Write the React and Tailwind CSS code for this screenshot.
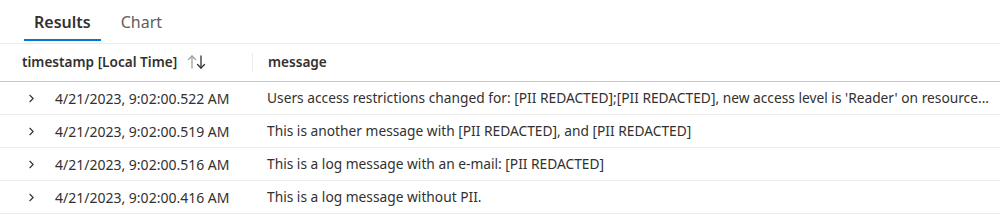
import { FiChevronRight } from "react-icons/fi";

const rows = [
  {
    time: "4/21/2023, 9:02:00.522 AM",
    message:
      "Users access restrictions changed for: [PII REDACTED];[PII REDACTED], new access level is 'Reader' on resource...",
  },
  {
    time: "4/21/2023, 9:02:00.519 AM",
    message: "This is another message with [PII REDACTED], and [PII REDACTED]",
  },
  {
    time: "4/21/2023, 9:02:00.516 AM",
    message: "This is a log message with an e-mail: [PII REDACTED]",
  },
  {
    time: "4/21/2023, 9:02:00.416 AM",
    message: "This is a log message without PII.",
  },
];

function SortIcon() {
  return (
    <svg width="20" height="16" viewBox="0 0 20 16" fill="none" strokeWidth="1.3" strokeLinecap="round" strokeLinejoin="round">
      <g stroke="#a19f9d">
        <path d="M5 14V2" />
        <path d="M1.5 5.5 5 2l3.5 3.5" />
      </g>
      <g stroke="#323130">
        <path d="M14 2v12" />
        <path d="M10.5 10.5 14 14l3.5-3.5" />
      </g>
    </svg>
  );
}

function App() {
  return (
    <div
      className="w-[1000px] h-[216px] bg-white overflow-hidden text-[#323130]"
      style={{ fontFamily: "'Noto Sans', 'Open Sans', sans-serif" }}
    >
      <div className="flex h-[44px] border-b border-[#edebe9] pl-[24px]">
        <div className="relative flex items-center px-[10px] text-[16px] font-semibold text-[#323130]">
          Results
          <div className="absolute left-0 right-0 bottom-[2px] h-[2px] bg-[#0078d4]" />
        </div>
        <div className="flex items-center px-[20px] text-[16px] text-[#605e5c]">
          Chart
        </div>
      </div>

      <div className="flex h-[38px] items-center border-b border-[#c8c6c4] text-[13.6px] font-semibold">
        <div className="flex w-[252px] shrink-0 items-center pl-[22px]">
          <span>timestamp [Local Time]</span>
          <span className="ml-[10px] flex">
            <SortIcon />
          </span>
        </div>
        <div className="h-[19px] w-px shrink-0 bg-[#edebe9]" />
        <div className="pl-[15px]">message</div>
      </div>

      {rows.map((row) => (
        <div
          key={row.time}
          className="flex h-[33px] items-center border-b border-[#edebe9] text-[14px]"
        >
          <div className="flex w-[252px] shrink-0 items-center pl-[25px]">
            <FiChevronRight className="h-[13px] w-[13px] text-[#323130]" />
            <span className="ml-[17px] whitespace-nowrap">{row.time}</span>
          </div>
          <div className="ml-[15px] whitespace-nowrap text-[13.75px]">{row.message}</div>
        </div>
      ))}
    </div>
  );
}

export default App;
